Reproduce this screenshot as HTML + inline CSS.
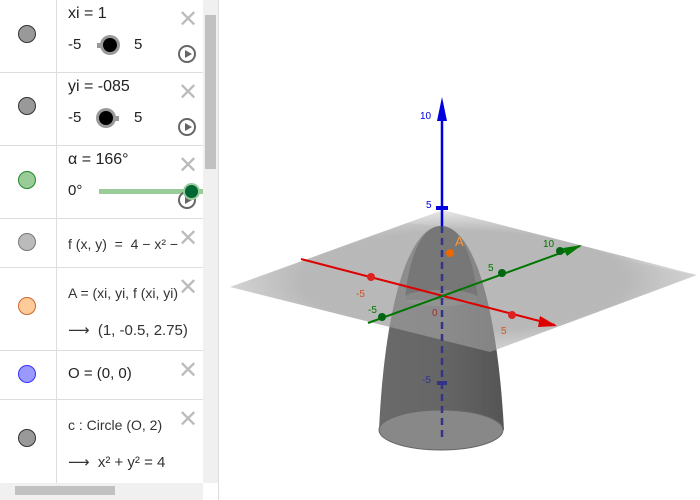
<!DOCTYPE html>
<html><head><meta charset="utf-8"><style>
body{margin:0;width:700px;height:500px;overflow:hidden;background:#fff;font-family:"Liberation Sans","DejaVu Sans",sans-serif;position:relative}
.row{position:absolute;left:0;width:203px;border-bottom:1px solid #ddd}
.mk{position:absolute;left:0;width:56px;height:100%;border-right:1px solid #ddd}
.dot{position:absolute;left:18px;width:18px;height:18px;border-radius:50%;border:1px solid #333;box-sizing:border-box}
.x{position:absolute;left:178px;color:#bbb;font-size:24px;line-height:20px;font-weight:300}
.play{position:absolute;left:178px;width:18px;height:18px;border:2px solid #666;border-radius:50%;box-sizing:border-box}
.play:after{content:"";position:absolute;left:5px;top:3px;border-left:7px solid #666;border-top:4px solid transparent;border-bottom:4px solid transparent}
.t{position:absolute;left:68px;font-size:16px;color:#222;white-space:nowrap}
.s{position:absolute;left:68px;font-size:14px;color:#333;white-space:nowrap}
</style></head><body>
<div style="position:absolute;left:0;top:0;width:203px;height:483px;overflow:hidden">
<div class="row" style="top:0;height:72px"><div class="mk"><div class="dot" style="top:25px;background:#999"></div></div>
<div class="t" style="top:5px">xi = 1</div><div class="t" style="top:36px;font-size:15px">-5</div>
<div style="position:absolute;left:97px;top:43px;width:22px;height:5px;background:#999"></div><div style="position:absolute;left:103px;top:38px;width:14px;height:14px;border-radius:50%;background:#000;box-shadow:0 0 0 3px #999"></div>
<div class="t" style="top:36px;font-size:15px;left:134px">5</div><div class="x" style="top:10px">✕</div><div class="play" style="top:45px"></div></div>
<div class="row" style="top:73px;height:72px"><div class="mk"><div class="dot" style="top:24px;background:#999"></div></div>
<div class="t" style="top:5px">yi = -085</div><div class="t" style="top:36px;font-size:15px">-5</div>
<div style="position:absolute;left:97px;top:43px;width:22px;height:5px;background:#999"></div><div style="position:absolute;left:99px;top:38px;width:14px;height:14px;border-radius:50%;background:#000;box-shadow:0 0 0 3px #999"></div>
<div class="t" style="top:36px;font-size:15px;left:134px">5</div><div class="x" style="top:10px">✕</div><div class="play" style="top:45px"></div></div>
<div class="row" style="top:146px;height:72px"><div class="mk"><div class="dot" style="top:25px;background:#9c9;border-color:#282"></div></div>
<div class="t" style="top:5px">α = 166°</div><div class="t" style="top:36px;font-size:15px">0°</div>
<div style="position:absolute;left:99px;top:43px;width:110px;height:5px;background:#9c9"></div><div class="x" style="top:10px">✕</div><div class="play" style="top:45px"></div>
<div style="position:absolute;left:185px;top:39px;width:13px;height:13px;border-radius:50%;background:#063;box-shadow:0 0 0 2px #9c9"></div></div>
<div class="row" style="top:219px;height:48px"><div class="mk"><div class="dot" style="top:14px;background:#bbb;border-color:#777"></div></div>
<div class="s" style="top:17px">f (x, y) &nbsp;=&nbsp; 4 − x² −</div><div class="x" style="top:10px">✕</div></div>
<div class="row" style="top:268px;height:82px"><div class="mk"><div class="dot" style="top:29px;background:#fc9;border-color:#c63"></div></div>
<div class="s" style="top:17px">A = (xi, yi, f (xi, yi)</div><div class="s" style="top:53px;font-size:15px">⟶ &nbsp;(1, -0.5, 2.75)</div><div class="x" style="top:10px">✕</div></div>
<div class="row" style="top:351px;height:48px"><div class="mk"><div class="dot" style="top:14px;background:#99f;border-color:#33f"></div></div>
<div class="t" style="top:14px;font-size:15px">O = (0, 0)</div><div class="x" style="top:10px">✕</div></div>
<div class="row" style="top:400px;height:84px"><div class="mk"><div class="dot" style="top:29px;background:#999"></div></div>
<div class="s" style="top:17px">c : Circle (O, 2)</div><div class="s" style="top:53px;font-size:15px">⟶ &nbsp;x² + y² = 4</div><div class="x" style="top:10px">✕</div></div>
</div>
<div style="position:absolute;left:203px;top:0;width:15px;height:483px;background:#f0f0f0"></div>
<div style="position:absolute;left:205px;top:15px;width:11px;height:154px;background:#c1c1c1"></div>
<div style="position:absolute;left:218px;top:0;width:1px;height:500px;background:#ddd"></div>
<div style="position:absolute;left:0;top:483px;width:203px;height:17px;background:#f0f0f0"></div>
<div style="position:absolute;left:15px;top:486px;width:100px;height:9px;background:#c1c1c1"></div>
<svg style="position:absolute;left:0;top:0" width="700" height="500">
<defs><radialGradient id="pl" cx="50%" cy="50%" r="50%"><stop offset="0.7" stop-color="#999"/><stop offset="1" stop-color="#ddd"/></radialGradient>
<linearGradient id="cn" x1="0" x2="1"><stop offset="0" stop-color="#6a6a6a"/><stop offset="0.5" stop-color="#666"/><stop offset="1" stop-color="#555"/></linearGradient></defs>
<polygon points="230,287 443,210 697,275 490,352" fill="url(#pl)" opacity="0.7"/>
<path d="M379,430 C385,300 410,226 441,226 C472,226 497,300 504,430 Z" fill="url(#cn)"/>
<ellipse cx="441" cy="430" rx="62" ry="20" fill="#888" stroke="#666"/>
<polygon points="230,287 407,223 476,230 697,275 490,352" fill="#bbb" opacity="0.45"/>
<path d="M441,226 C463,226 474,262 478,300 L405,300 C408,262 420,226 441,226Z" fill="#777"/>
<ellipse cx="441" cy="298" rx="37" ry="8" fill="#999" opacity="0.5"/>
<line x1="301" y1="259" x2="555" y2="325" stroke="#d00" stroke-width="2"/>
<polygon points="557,326 540,316 538,327" fill="#d00"/>
<circle cx="371" cy="277" r="4" fill="#d22"/><circle cx="512" cy="315" r="4" fill="#d22"/>
<line x1="368" y1="323" x2="580" y2="246" stroke="#070" stroke-width="2"/>
<polygon points="582,245 563,248 567,256" fill="#070"/>
<circle cx="382" cy="317" r="4" fill="#061"/><circle cx="502" cy="273" r="4" fill="#061"/><circle cx="560" cy="251" r="4" fill="#061"/>
<line x1="442" y1="120" x2="442" y2="226" stroke="#00d" stroke-width="2.5"/>
<polygon points="442,97 437,121 447,121" fill="#00d"/>
<rect x="436" y="206" width="12" height="4" fill="#00d"/>
<line x1="442" y1="226" x2="442" y2="440" stroke="#338" stroke-width="2.5" stroke-dasharray="7,5"/>
<rect x="437" y="381" width="10" height="4" fill="#338"/>
<circle cx="450" cy="253" r="4" fill="#e60"/>
<g font-size="10" font-family="Liberation Sans,sans-serif">
<text x="420" y="119" fill="#00d">10</text><text x="426" y="208" fill="#00d">5</text><text x="422" y="383" fill="#338">-5</text>
<text x="455" y="246" fill="#f93" font-size="13">A</text>
<text x="356" y="297" fill="#c52">-5</text><text x="501" y="334" fill="#c52">5</text><text x="432" y="316" fill="#933">0</text>
<text x="368" y="313" fill="#070">-5</text><text x="488" y="271" fill="#070">5</text><text x="543" y="247" fill="#070">10</text>
</g></svg>
</body></html>
